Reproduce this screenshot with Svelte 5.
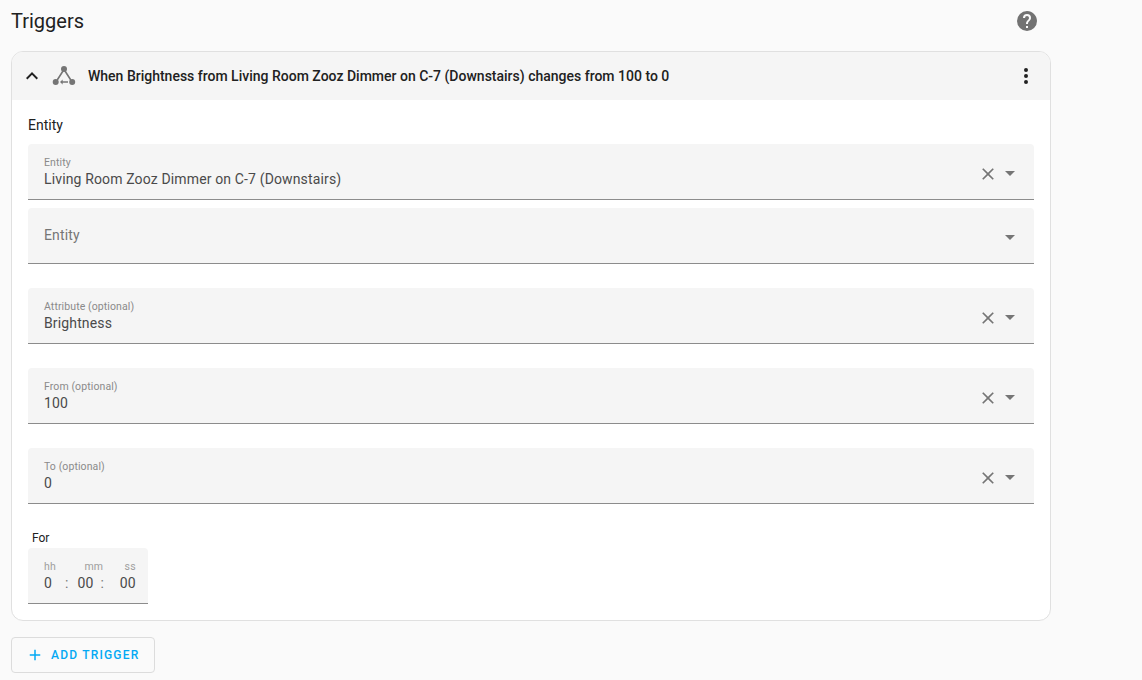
<script lang="ts">
  const closePath = 'M19,6.41L17.59,5L12,10.59L6.41,5L5,6.41L10.59,12L5,17.59L6.41,19L12,13.41L17.59,19L19,17.59L13.41,12L19,6.41Z';
  const menuDown = 'M7,10L12,15L17,10H7Z';

  const fields = [
    { label: 'Entity', value: 'Living Room Zooz Dimmer on C-7 (Downstairs)', cls: 'tight' },
    { label: 'Entity', value: '', cls: 'wide' },
    { label: 'Attribute (optional)', value: 'Brightness', cls: 'wide' },
    { label: 'From (optional)', value: '100', cls: 'wide' },
    { label: 'To (optional)', value: '0', cls: '' },
  ];
</script>

<div class="page">
  <div class="title-row">
    <h1>Triggers</h1>
    <svg class="help" viewBox="0 0 24 24" width="24" height="24"><path d="M15.07,11.25L14.17,12.17C13.45,12.89 13,13.5 13,15H11V14.5C11,13.39 11.45,12.39 12.17,11.67L13.41,10.41C13.78,10.05 14,9.55 14,9C14,7.89 13.1,7 12,7A2,2 0 0,0 10,9H8A4,4 0 0,1 12,5A4,4 0 0,1 16,9C16,9.88 15.64,10.67 15.07,11.25M13,19H11V17H13M12,2A10,10 0 0,0 2,12A10,10 0 0,0 12,22A10,10 0 0,0 22,12C22,6.47 17.5,2 12,2Z" /></svg>
  </div>

  <div class="card">
    <div class="card-header">
      <svg class="chevron" viewBox="0 0 24 24" width="24" height="24"><path d="M7.41,15.41L12,10.83L16.59,15.41L18,14L12,8L6,14L7.41,15.41Z" /></svg>
      <svg class="state" viewBox="0 0 24 24" width="24" height="24">
        <circle cx="12" cy="5" r="3" />
        <circle cx="3.7" cy="18" r="3" />
        <circle cx="20.2" cy="18" r="3" />
        <path d="M11 7L5.2 16M13 7L18.8 16" class="line" />
        <path d="M9 18H16" class="line" />
        <path d="M10.6 15.6L8 18L10.6 20.4Z" />
      </svg>
      <span class="header-text">When Brightness from Living Room Zooz Dimmer on C-7 (Downstairs) changes from 100 to 0</span>
      <svg class="dots" viewBox="0 0 24 24" width="24" height="24"><path d="M12,16A2,2 0 0,1 14,18A2,2 0 0,1 12,20A2,2 0 0,1 10,18A2,2 0 0,1 12,16M12,10A2,2 0 0,1 14,12A2,2 0 0,1 12,14A2,2 0 0,1 10,12A2,2 0 0,1 12,10M12,4A2,2 0 0,1 14,6A2,2 0 0,1 12,8A2,2 0 0,1 10,6A2,2 0 0,1 12,4Z" /></svg>
    </div>

    <div class="card-body">
      <div class="section-label">Entity</div>

      {#each fields as f}
        <div class="field {f.cls}" class:empty={!f.value}>
          {#if f.value}
            <div class="field-text">
              <span class="float-label">{f.label}</span>
              <span class="value">{f.value}</span>
            </div>
            <svg class="clear" viewBox="0 0 24 24" width="20" height="20"><path d={closePath} /></svg>
          {:else}
            <span class="placeholder">{f.label}</span>
          {/if}
          <svg class="arrow" viewBox="0 0 24 24" width="24" height="24"><path d={menuDown} /></svg>
        </div>
      {/each}

      <div class="for-label">For</div>
      <div class="time">
        <div class="unit hh"><span class="unit-label">hh</span><span class="unit-value">0</span></div>
        <span class="sep">:</span>
        <div class="unit mm"><span class="unit-label">mm</span><span class="unit-value">00</span></div>
        <span class="sep">:</span>
        <div class="unit ss"><span class="unit-label">ss</span><span class="unit-value">00</span></div>
      </div>
    </div>
  </div>

  <button type="button" class="add-btn">
    <svg viewBox="0 0 24 24" width="18" height="18"><path d="M19,13H13V19H11V13H5V11H11V5H13V11H19V13Z" /></svg>
    <span>ADD TRIGGER</span>
  </button>
</div>

<style>
  :global(body) {
    margin: 0;
    background: #fafafa;
    font-family: Roboto, "Liberation Sans", sans-serif;
  }

  .page {
    width: 1040px;
    height: 680px;
    padding-left: 11px;
    overflow: hidden;
  }

  .title-row {
    display: flex;
    align-items: flex-start;
    justify-content: space-between;
    height: 51px;
    padding-right: 12px;
    box-sizing: border-box;
  }

  h1 {
    margin: 0;
    font-size: 20px;
    font-weight: 400;
    line-height: 42px;
    color: #212121;
  }

  .help {
    margin-top: 9px;
    fill: #727272;
  }

  .card {
    box-sizing: border-box;
    height: 570px;
    background: #fff;
    border: 1px solid #e0e0e0;
    border-radius: 12px;
    overflow: hidden;
  }

  .card-header {
    display: flex;
    align-items: center;
    height: 48px;
    padding: 0 12px 0 8px;
    background: #f5f5f5;
  }

  .chevron { fill: #212121; }

  .state {
    margin-left: 8px;
    fill: #757575;
  }
  .state .line {
    fill: none;
    stroke: #757575;
    stroke-width: 1.6;
  }

  .header-text {
    flex: 1;
    margin-left: 12px;
    font-size: 14px;
    font-weight: 500;
    color: #212121;
    white-space: nowrap;
  }

  .dots { fill: #212121; }

  .card-body {
    padding: 0 16px;
  }

  .section-label {
    height: 44px;
    line-height: 50px;
    font-size: 14px;
    color: #212121;
  }

  .field {
    display: flex;
    align-items: center;
    box-sizing: border-box;
    height: 56px;
    padding: 0 12px 0 16px;
    background: #f5f5f5;
    border-bottom: 1px solid #8c8c8c;
    border-radius: 4px 4px 0 0;
  }
  .field.tight { margin-bottom: 8px; }
  .field.wide { margin-bottom: 24px; }

  .field-text {
    flex: 1;
    display: flex;
    flex-direction: column;
    padding-top: 1px;
  }

  .float-label {
    font-size: 10.5px;
    line-height: 14px;
    letter-spacing: 0.1px;
    color: #8a8a8a;
  }

  .value {
    font-size: 14px;
    line-height: 20px;
    margin-top: -1px;
    letter-spacing: 0.14px;
    color: #4a4a4a;
  }

  .placeholder {
    flex: 1;
    font-size: 14px;
    letter-spacing: 0.14px;
    color: #757575;
    margin-top: -2px;
  }

  .clear {
    fill: #757575;
    margin-top: 4px;
  }

  .arrow {
    fill: #757575;
    margin-top: 2px;
  }

  .for-label {
    height: 44px;
    line-height: 68px;
    padding-left: 4px;
    font-size: 12px;
    color: #212121;
  }

  .time {
    display: flex;
    box-sizing: border-box;
    width: 120px;
    height: 56px;
    padding-left: 16px;
    background: #f5f5f5;
    border-bottom: 1px solid #8c8c8c;
    border-radius: 4px 4px 0 0;
    color: #4a4a4a;
  }

  .unit {
    display: flex;
    flex-direction: column;
    padding-top: 12px;
  }
  .hh { width: 21px; }
  .mm { width: 23px; margin-left: 9px; align-items: flex-start; }
  .mm .unit-label { margin-left: 7px; }
  .ss { width: 15px; margin-left: 17px; align-items: flex-end; }

  .unit-label {
    font-size: 10.5px;
    line-height: 14px;
    letter-spacing: 0.2px;
    color: #9e9e9e;
  }

  .unit-value {
    font-size: 14px;
    line-height: 20px;
    letter-spacing: 0.2px;
    margin-top: -1px;
  }

  .sep {
    font-size: 14px;
    line-height: 20px;
    margin-top: 25px;
    color: #757575;
  }

  .add-btn {
    display: flex;
    align-items: center;
    box-sizing: border-box;
    width: 144px;
    height: 36px;
    margin-top: 16px;
    padding: 0 0 0 14px;
    background: transparent;
    border: 1px solid #dcdcdc;
    border-radius: 4px;
    font-family: inherit;
    color: #03a9f4;
  }
  .add-btn svg {
    fill: #03a9f4;
    flex: none;
  }
  .add-btn span {
    margin-left: 7px;
    font-size: 12px;
    font-weight: 500;
    letter-spacing: 1.2px;
    white-space: nowrap;
  }
</style>
